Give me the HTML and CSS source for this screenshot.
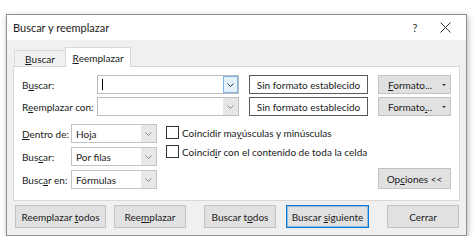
FILE: index.html
```html
<!DOCTYPE html>
<html lang="es">
  <head>
    <meta charset="UTF-8" />
    <title>Buscar y reemplazar</title>
    <link rel="stylesheet" href="styles.css">
  </head>
  <body>
    <div class="dialog">
      <div class="titlebar">
        <span class="title">Buscar y reemplazar</span>
        <span class="help">?</span>
        <span class="close">
          <svg width="11" height="11" viewBox="0 0 11 11">
            <path d="M0.5 0.5L10.5 10.5M10.5 0.5L0.5 10.5" stroke="#333" stroke-width="1" fill="none" />
          </svg>
        </span>
      </div>

      <div class="tabs">
        <div class="tab"><u>B</u>uscar</div>
        <div class="tab active"><u>R</u>eemplazar</div>
      </div>

      <div class="panel">
        <!-- Find / replace rows -->
        <div class="find-row">
          <label class="find-label">B<u>u</u>scar:</label>
          <div class="combo">
            <span class="combo-field"><span class="caret"></span></span>
            <span class="combo-drop focused">
              <svg width="7" height="4" viewBox="0 0 7 4"><path d="M0.5 0.5L3.5 3.5L6.5 0.5" stroke="#333" fill="none" /></svg>
            </span>
          </div>
          <div class="fmt-preview">Sin formato establecido</div>
          <button class="btn split"><span><u>F</u>ormato...</span><span class="split-arrow"></span></button>
        </div>
        <div class="find-row">
          <label class="find-label">R<u>e</u>emplazar con:</label>
          <div class="combo">
            <span class="combo-field"></span>
            <span class="combo-drop">
              <svg width="7" height="4" viewBox="0 0 7 4"><path d="M0.5 0.5L3.5 3.5L6.5 0.5" stroke="#888" fill="none" /></svg>
            </span>
          </div>
          <div class="fmt-preview">Sin formato establecido</div>
          <button class="btn split"><span>Formato<u>.</u>..</span><span class="split-arrow"></span></button>
        </div>

        <!-- Options -->
        <div class="options">
          <div class="selects">
            <div class="select-row">
              <label class="opt-label"><u>D</u>entro de:</label>
              <div class="select"><span class="select-value">Hoja</span><span class="select-drop">
                <svg width="7" height="4" viewBox="0 0 7 4"><path d="M0.5 0.5L3.5 3.5L6.5 0.5" stroke="#888" fill="none" /></svg>
              </span></div>
            </div>
            <div class="select-row">
              <label class="opt-label">Bus<u>c</u>ar:</label>
              <div class="select"><span class="select-value">Por filas</span><span class="select-drop">
                <svg width="7" height="4" viewBox="0 0 7 4"><path d="M0.5 0.5L3.5 3.5L6.5 0.5" stroke="#888" fill="none" /></svg>
              </span></div>
            </div>
            <div class="select-row">
              <label class="opt-label">Busc<u>a</u>r en:</label>
              <div class="select"><span class="select-value">Fórmulas</span><span class="select-drop">
                <svg width="7" height="4" viewBox="0 0 7 4"><path d="M0.5 0.5L3.5 3.5L6.5 0.5" stroke="#888" fill="none" /></svg>
              </span></div>
            </div>
          </div>

          <div class="checks">
            <label class="check"><span class="box"></span>Coincidir ma<u>y</u>úsculas y minúsculas</label>
            <label class="check"><span class="box"></span>Coincid<u>i</u>r con el contenido de toda la celda</label>
          </div>

          <button class="btn options-btn">Op<u>c</u>iones &lt;&lt;</button>
        </div>
      </div>

      <!-- Dialog buttons -->
      <div class="actions">
        <button class="btn act-replace-all">Reemplazar <u>t</u>odos</button>
        <button class="btn act-replace">Ree<u>m</u>plazar</button>
        <button class="btn act-find-all">Buscar t<u>o</u>dos</button>
        <button class="btn act-find-next default">Buscar <u>s</u>iguiente</button>
        <button class="btn act-close">Cerrar</button>
      </div>
    </div>
  </body>
</html>
```

FILE: styles.css
```css
/* Page */
body {
  margin: 0;
  padding: 14px 0 0 6px;
  background: #ffffff;
  font-family: "Lato", "Noto Sans", sans-serif;
  font-size: 10px;
  color: #1a1a1a;
}

u {
  text-decoration-thickness: 1px;
  text-underline-offset: 1px;
}

/* Dialog frame */
.dialog {
  width: 459px;
  height: 220px;
  border: 1px solid #8f8f8f;
  background: #f0f0f0;
  box-shadow: 1px 2px 6px rgba(0, 0, 0, 0.28);
  display: flex;
  flex-direction: column;
}

.titlebar {
  height: 25px;
  background: #fff;
  display: flex;
  align-items: center;
  padding-left: 6px;
  padding-right: 6px;
}

.title {
  font-size: 11px;
  flex: 1;
}

.help {
  width: 30px;
  text-align: center;
  font-size: 11px;
  color: #333;
}

.close {
  width: 30px;
  display: flex;
  justify-content: center;
}

/* Tabs */
.tabs {
  height: 26px;
  display: flex;
  align-items: flex-end;
  padding-left: 7px;
}

.tab {
  width: 51px;
  height: 16px;
  box-sizing: border-box;
  border: 1px solid #d9d9d9;
  border-bottom: none;
  border-right: none;
  display: flex;
  align-items: center;
  justify-content: center;
}

.tab.active {
  width: 66px;
  height: 20px;
  background: #fff;
  border-right: 1px solid #d9d9d9;
  margin-bottom: -1px;
  position: relative;
  z-index: 1;
}

/* Panel */
.panel {
  margin: 0 6px;
  height: 135px;
  box-sizing: border-box;
  border: 1px solid #d9d9d9;
  background: #fff;
  padding: 8px 8px 0 8px;
}

.find-row {
  display: flex;
  align-items: center;
  height: 19px;
  margin-bottom: 3px;
}

.find-label {
  width: 75px;
}

.combo {
  width: 142px;
  height: 19px;
  box-sizing: border-box;
  border: 1px solid #bdbdbd;
  display: flex;
}

.combo-field {
  flex: 1;
  display: flex;
  align-items: center;
  padding-left: 4px;
}

.caret {
  width: 1px;
  height: 11px;
  background: #000;
}

.combo-drop {
  width: 15px;
  background: #e6e6e6;
  display: flex;
  align-items: center;
  justify-content: center;
}

.combo-drop.focused {
  background: #e5f1fb;
  box-shadow: inset 0 0 0 1px #7eb4ea;
}

.fmt-preview {
  width: 119px;
  height: 19px;
  box-sizing: border-box;
  margin-left: 10px;
  border: 1px solid #5a5a5a;
  display: flex;
  align-items: center;
  justify-content: center;
}

/* Buttons */
.btn {
  font-family: inherit;
  font-size: 10px;
  color: #1a1a1a;
  background: #e1e1e1;
  border: 1px solid #c2c2c2;
  padding: 0;
  box-sizing: border-box;
}

.btn.split {
  width: 73px;
  height: 19px;
  margin-left: 10px;
  display: flex;
  align-items: center;
  justify-content: flex-end;
  gap: 10px;
  padding-right: 4px;
}

.split-arrow {
  width: 0;
  height: 0;
  border-left: 2px solid transparent;
  border-right: 2px solid transparent;
  border-top: 2px solid #333;
}

/* Options area */
.options {
  display: flex;
  margin-top: 8px;
}

.selects {
  display: flex;
  flex-direction: column;
  gap: 4px;
}

.select-row {
  display: flex;
  align-items: center;
  height: 19px;
}

.opt-label {
  width: 49px;
}

.select {
  width: 86px;
  height: 19px;
  box-sizing: border-box;
  border: 1px solid #c4c4c4;
  display: flex;
}

.select-value {
  flex: 1;
  display: flex;
  align-items: center;
  padding-left: 4px;
}

.select-drop {
  width: 15px;
  background: #e8e8e8;
  display: flex;
  align-items: center;
  justify-content: center;
}

.checks {
  display: flex;
  flex-direction: column;
  gap: 6px;
  margin-left: 9px;
  margin-top: 2px;
}

.check {
  display: flex;
  align-items: center;
  height: 13px;
}

.box {
  width: 13px;
  height: 13px;
  box-sizing: border-box;
  border: 1px solid #333;
  background: #fff;
  margin-right: 3px;
}

.options-btn {
  width: 73px;
  height: 21px;
  margin-left: auto;
  align-self: flex-end;
}

/* Bottom buttons */
.actions {
  display: flex;
  padding: 4px 0 0 8px;
}

.actions .btn {
  height: 23px;
}

.act-replace-all {
  width: 91px;
}

.act-replace {
  width: 72px;
  margin-left: 8px;
}

.act-find-all {
  width: 72px;
  margin-left: 18px;
}

.act-find-next {
  width: 83px;
  margin-left: 10px;
}

.act-close {
  width: 72px;
  margin-left: 18px;
}

.btn.default {
  border-color: #0078d7;
  box-shadow: inset 0 0 0 1px rgba(0, 120, 215, 0.35);
}
```
